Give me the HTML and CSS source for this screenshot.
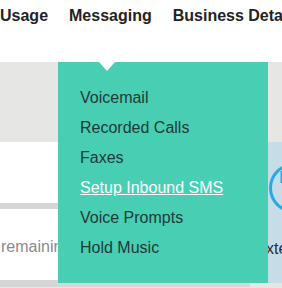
FILE: index.html
```html
<!DOCTYPE html>
<html>
<head>
<meta charset="utf-8">
<link rel="stylesheet" href="styles.css">
</head>
<body>
<div class="page">
  <nav class="nav">
    <span class="nav-item">Usage</span>
    <span class="nav-item">Messaging</span>
    <span class="nav-item">Business Details</span>
  </nav>
  <div class="band"></div>
  <div class="main">
    <div class="left">
      <div class="inputbox"><span class="hint">remaining</span></div>
    </div>
    <div class="right">
      <svg class="circle" width="50" height="50" viewBox="0 0 50 50">
        <circle cx="25" cy="25" r="23.5" fill="none" stroke="#29a9e1" stroke-width="3"/>
        <path d="M13 8 L13 20 M13 8 Q18 6 22 10" fill="none" stroke="#29a9e1" stroke-width="3"/>
      </svg>
      <div class="label">Extension</div>
    </div>
  </div>
  <div class="footer"></div>

  <div class="dropdown">
    <span class="notch"></span>
    <ul class="menu">
      <li>Voicemail</li>
      <li>Recorded Calls</li>
      <li>Faxes</li>
      <li class="active">Setup Inbound SMS</li>
      <li>Voice Prompts</li>
      <li>Hold Music</li>
    </ul>
  </div>
</div>
</body>
</html>
```

FILE: styles.css
```css
html, body {
  margin: 0;
  padding: 0;
  overflow: hidden;
  background: #ffffff;
  font-family: "Liberation Sans", Arial, sans-serif;
}

.page {
  position: relative;
  width: 282px;
  height: 288px;
  overflow: hidden;
}

.nav {
  display: flex;
  gap: 21px;
  height: 62px;
  box-sizing: border-box;
  padding-top: 6px;
  white-space: nowrap;
  font-size: 16px;
  line-height: 20px;
  font-weight: bold;
  color: #232323;
}

.band {
  height: 80px;
  background: #e6e6e4;
}

.main {
  display: flex;
  height: 141px;
}

.left {
  flex: 0 0 250px;
  padding-top: 61px;
  box-sizing: border-box;
}

.inputbox {
  height: 67px;
  border-top: 6px solid #d6d6d6;
  border-bottom: 7px solid #d6d6d6;
  background: #fff;
  display: flex;
  align-items: center;
  padding-top: 4px;
  box-sizing: content-box;
}

.hint {
  font-size: 16px;
  color: #8a8a8a;
  line-height: 20px;
  padding-left: 1px;
}

.right {
  flex: 0 0 88px;
  background: #c6dde8;
  display: flex;
  flex-direction: column;
  align-items: center;
  padding-top: 21px;
  box-sizing: border-box;
}

.circle {
  display: block;
}

.label {
  margin-top: 26px;
  margin-right: 7px;
  font-size: 16px;
  line-height: 20px;
  color: #2b2b2b;
  white-space: nowrap;
}

.footer {
  height: 5px;
  background: #e6e6e4;
}

.dropdown {
  position: absolute;
  left: 58px;
  top: 62px;
  width: 210px;
  height: 221px;
  background: #48ceb3;
}

.notch {
  position: absolute;
  left: 41px;
  top: 0;
  width: 0;
  height: 0;
  border-left: 8.5px solid transparent;
  border-right: 8.5px solid transparent;
  border-top: 9px solid #ffffff;
}

.menu {
  list-style: none;
  margin: 0;
  padding: 21px 0 0 22px;
  font-size: 16px;
  line-height: 30px;
  color: #1f3a37;
}

.menu li {
  white-space: nowrap;
}

.menu .active {
  color: #ffffff;
  text-decoration: underline;
}
```
